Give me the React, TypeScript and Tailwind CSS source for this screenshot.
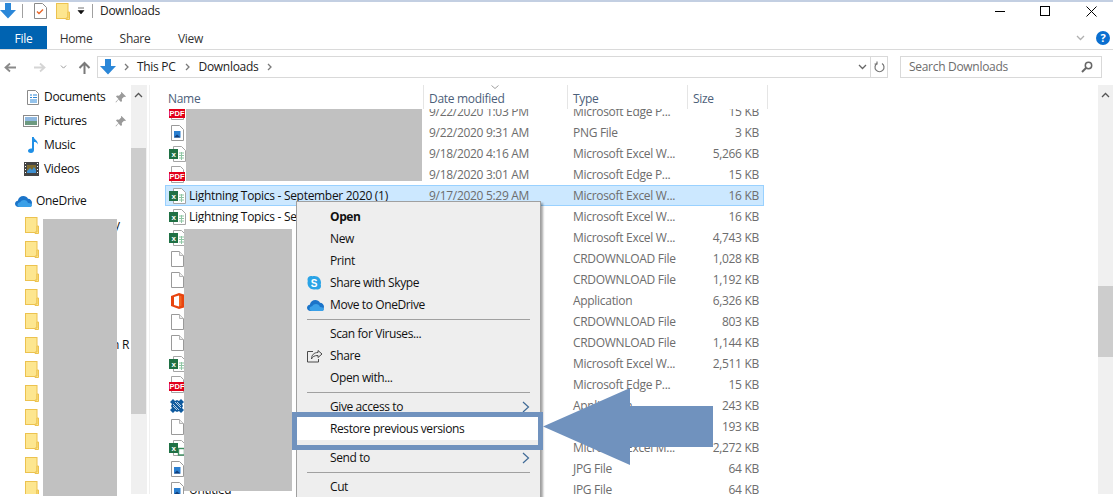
import React from "react";

const BLUE = "#2b87d8";

function DownArrow({ size = 18 }: { size?: number }) {
  return (
    <svg width={size} height={size} viewBox="0 0 16 16">
      <path d="M5 0h6v7h5l-8 8.5L0 7h5z" fill={BLUE} />
    </svg>
  );
}

function FolderIcon() {
  return (
    <svg width="14" height="17" viewBox="0 0 14 17">
      <rect x="0.5" y="0.5" width="11.5" height="15" fill="#fde68f" stroke="#ecc24f" />
      <path d="M12 9h1.5v7.5H10V15h2z" fill="#fde68f" stroke="#ecc24f" />
    </svg>
  );
}

function PlainFile() {
  return (
    <svg width="13" height="16" viewBox="0 0 13 16">
      <path d="M.5.5h8l4 4v11H.5z" fill="#fff" stroke="#9a9a9a" />
      <path d="M8.5.5v4h4" fill="#eee" stroke="#b5b5b5" />
    </svg>
  );
}

function ExcelIcon() {
  return (
    <svg width="17" height="16" viewBox="0 0 17 16">
      <path d="M4.5.5h8l4 4v11h-12z" fill="#fff" stroke="#a5a5a5" />
      <path d="M10 7h5M10 9.5h5M10 12h5M12.5 6v8" stroke="#8fc6a4" strokeWidth="1" />
      <rect x="0" y="3" width="9" height="10" fill="#1f7044" />
      <text x="4.5" y="11" fontSize="8" fontWeight="700" fill="#fff" textAnchor="middle" fontFamily="Liberation Sans">x</text>
    </svg>
  );
}

function ExcelMacroIcon() {
  return (
    <svg width="17" height="16" viewBox="0 0 17 16">
      <path d="M4.5.5h8l4 4v11h-12z" fill="#fff" stroke="#a5a5a5" />
      <rect x="9.5" y="8.5" width="6" height="6.5" fill="#fff" stroke="#3c8f60" strokeWidth="1.4" />
      <rect x="0" y="3" width="9" height="10" fill="#1f7044" />
      <text x="4.5" y="11" fontSize="8" fontWeight="700" fill="#fff" textAnchor="middle" fontFamily="Liberation Sans">x</text>
    </svg>
  );
}

function PdfIcon() {
  return (
    <svg width="17" height="17" viewBox="0 0 17 17">
      <path d="M2.5.5h9l3 3v13h-12z" fill="#fff" stroke="#a5a5a5" />
      <rect x="0" y="6" width="16" height="9" fill="#e2001a" />
      <text x="8" y="13.400" fontSize="7.500" fontWeight="700" fill="#fff" textAnchor="middle" fontFamily="Liberation Sans" letterSpacing="0">PDF</text>
    </svg>
  );
}

function PngIcon() {
  return (
    <svg width="13" height="16" viewBox="0 0 13 16">
      <path d="M.5.5h8l4 4v11H.5z" fill="#fff" stroke="#9a9a9a" />
      <rect x="3" y="6" width="6.500" height="6.500" fill="#2a7fd0" />
      <path d="M3 12.500l3-3 3.500 3z" fill="#123f7c" />
    </svg>
  );
}

function OfficeIcon() {
  return (
    <svg width="13" height="16" viewBox="0 0 13 16">
      <path d="M8 0l5 1.500v13L8 16 0 13V3z" fill="#e8440f" />
      <path d="M8 2.500L3 4v8l5 1.500z" fill="#fff" />
      <path d="M8 2.500v11l2.500-.8V3.200z" fill="#f26522" />
    </svg>
  );
}

function GearIcon() {
  return (
    <svg width="14" height="14" viewBox="0 0 14 14">
      <path d="M3 0l2 2 2-1 2 1 2-2 3 3-2 2 1 2-1 2 2 2-3 3-2-2-2 1-2-1-2 2-3-3 2-2-1-2 1-2-2-2z" fill="#0f5a9e" />
      <path d="M3 5l6 6M5 3l6 6M7 3l4 4M3 7l4 4" stroke="#fff" strokeWidth="0.700" />
    </svg>
  );
}

function OneDriveIcon({ w = 17 }: { w?: number }) {
  return (
    <svg width={w} height={(w * 11) / 17} viewBox="0 0 17 11">
      <path d="M3.500 11C1.500 11 0 9.600 0 7.800 0 6.200 1.200 5 2.800 4.800 3.400 2 5.600 0 8.400 0c2 0 3.700 1 4.600 2.700 2.200 0 4 1.800 4 4 0 2.400-1.800 4.300-4.200 4.300z" fill="#1b74c9" />
      <path d="M5 11c-1.500 0-2.500-1-2.500-2.300S3.700 6.300 5.200 6.300c.8-1.500 2.200-2.300 3.800-2.300 1.900 0 3.500 1.200 4 3h.3C15.500 7 17 8 17 9.200c0 1-.9 1.800-2 1.800z" fill="#3aa0e8" />
    </svg>
  );
}

const files: [React.ReactNode, string, string, string, string][] = [
  [<PdfIcon />, "", "9/22/2020 1:03 PM", "Microsoft Edge P...", "15 KB"],
  [<PngIcon />, "", "9/22/2020 9:31 AM", "PNG File", "3 KB"],
  [<ExcelIcon />, "", "9/18/2020 4:16 AM", "Microsoft Excel W...", "5,266 KB"],
  [<PdfIcon />, "", "9/18/2020 3:01 AM", "Microsoft Edge P...", "15 KB"],
  [<ExcelIcon />, "Lightning Topics - September 2020 (1)", "9/17/2020 5:29 AM", "Microsoft Excel W...", "16 KB"],
  [<ExcelIcon />, "Lightning Topics - September 2020", "", "Microsoft Excel W...", "16 KB"],
  [<ExcelIcon />, "", "", "Microsoft Excel W...", "4,743 KB"],
  [<PlainFile />, "", "", "CRDOWNLOAD File", "1,028 KB"],
  [<PlainFile />, "", "", "CRDOWNLOAD File", "1,192 KB"],
  [<OfficeIcon />, "", "", "Application", "6,326 KB"],
  [<PlainFile />, "", "", "CRDOWNLOAD File", "803 KB"],
  [<PlainFile />, "", "", "CRDOWNLOAD File", "1,144 KB"],
  [<ExcelIcon />, "", "", "Microsoft Excel W...", "2,511 KB"],
  [<PdfIcon />, "", "", "Microsoft Edge P...", "15 KB"],
  [<GearIcon />, "", "", "Application", "243 KB"],
  [<PlainFile />, "", "", "CRDOWNLOAD File", "193 KB"],
  [<ExcelMacroIcon />, "", "", "Microsoft Excel M...", "2,272 KB"],
  [<PngIcon />, "", "", "JPG File", "64 KB"],
  [<PngIcon />, "Untitled", "", "JPG File", "64 KB"],
];

type MenuEntry = { label?: string; bold?: boolean; icon?: React.ReactNode; sub?: boolean; sep?: boolean };

const menu: MenuEntry[] = [
  { label: "Open", bold: true },
  { label: "New" },
  { label: "Print" },
  {
    label: "Share with Skype",
    icon: (
      <svg width="14" height="14" viewBox="0 0 14 14">
        <path d="M4 0C2 0 .5 1.500.5 3.500c0 .6.1 1 .3 1.500C.6 5.600.5 6.300.5 7c0 3.600 2.900 6.500 6.500 6.500.7 0 1.400-.1 2-.3.5.2 1 .3 1.500.3 2 0 3.500-1.500 3.500-3.500 0-.6-.1-1-.3-1.500.2-.6.3-1.300.3-2C14 2.900 11.100 0 7.500 0 6.800 0 6.100.1 5.500.3 5 .1 4.600 0 4 0z" fill="#2aa3e6" />
        <text x="7" y="11" fontSize="10" fontWeight="700" fill="#fff" textAnchor="middle" fontFamily="Liberation Sans">S</text>
      </svg>
    ),
  },
  { label: "Move to OneDrive", icon: <OneDriveIcon /> },
  { sep: true },
  { label: "Scan for Viruses..." },
  {
    label: "Share",
    icon: (
      <svg width="16" height="14" viewBox="0 0 16 14" fill="none" stroke="#4a4a4a">
        <path d="M11 1.500l4 3.500-4 3.500V6.500C7.500 6.500 5.500 7.500 4.500 10 4.500 6 7 3.500 11 3.500z" />
        <path d="M6 2.500H.5v10.500h11V10" />
      </svg>
    ),
  },
  { label: "Open with..." },
  { sep: true },
  { label: "Give access to", sub: true },
  { label: "Restore previous versions" },
  { sep: true },
  { label: "Send to", sub: true },
  { sep: true },
  { label: "Cut" },
];

function Chevron({ up = false, className = "" }: { up?: boolean; className?: string }) {
  return (
    <svg width="9" height="6" viewBox="0 0 9 6" className={className}>
      <path d={up ? "M1 5l3.500-3.500L8 5" : "M1 1l3.500 3.500L8 1"} fill="none" stroke="currentColor" strokeWidth="1.300" />
    </svg>
  );
}

function Crumb({ className }: { className: string }) {
  return (
    <svg width="5" height="8" viewBox="0 0 5 8" className={className}>
      <path d="M1 1l3 3-3 3" fill="none" stroke="#7a7a7a" strokeWidth="1.300" />
    </svg>
  );
}

function Pin() {
  return (
    <svg width="11" height="11" viewBox="0 0 11 11" className="ml-auto mr-[5px]">
      <path d="M6.500 0L11 4.500l-1 .6-1-.3L6.800 7l.2 2-1 1-2.500-2.500L1 10.500l-.5-.5 3-3L1 4.500l1-1 2 .2L6.200 1.500 5.900.5z" fill="#9a9a9a" />
    </svg>
  );
}

function NavItem({ icon, label, pin }: { icon: React.ReactNode; label: string; pin?: boolean }) {
  return (
    <div className="flex h-6 items-center">
      <span className="flex w-[44px] shrink-0 justify-end pr-[5px]">{icon}</span>
      <span className="text-[#111]">{label}</span>
      {pin && <Pin />}
    </div>
  );
}

export default function App() {
  return (
    <div
      className="relative h-[497px] w-[1113px] overflow-hidden bg-white text-[12px] leading-none tracking-[-0.3px] text-[#1a1a1a]"
      style={{ fontFamily: '"Open Sans", "Noto Sans", sans-serif' }}
    >
      <div className="h-[2px] bg-[#c3cfe2]" />

      {/* Title bar */}
      <div className="flex h-[24px] items-center pb-[6px]">
        <DownArrow size={16} />
        <div className="ml-[6px] h-[14px] w-px bg-[#a0a0a0]" />
        <svg width="13" height="16" viewBox="0 0 13 16" className="ml-[11px]">
          <path d="M.5.5h8l4 4v11H.5z" fill="#fff" stroke="#8a8a8a" />
          <path d="M3 8.500l2 2 4-4" fill="none" stroke="#e8662a" strokeWidth="1.400" />
        </svg>
        <div className="ml-[9px]"><FolderIcon /></div>
        <svg width="8" height="8" viewBox="0 0 8 8" className="ml-[7px]">
          <path d="M1 1h6M1 3.500h6l-3 3.500z" fill="#111" stroke="#111" strokeWidth="0.600" />
        </svg>
        <div className="ml-[7px] h-[14px] w-px bg-[#a0a0a0]" />
        <span className="ml-[7px] text-[#222]">Downloads</span>
        <div className="ml-auto flex items-center">
          <div className="h-px w-[10px] bg-black" />
          <div className="ml-[35px] h-[10px] w-[10px] border border-black" />
          <svg width="11" height="11" viewBox="0 0 11 11" className="ml-[36px] mr-[16px]">
            <path d="M.5.5l10 10M10.500.5l-10 10" stroke="#000" />
          </svg>
        </div>
      </div>

      {/* Ribbon tabs */}
      <div className="flex h-[24px] items-stretch border-b border-[#dadada]">
        <div className="flex w-[47px] items-center justify-center bg-[#0063b1] pt-[2px] text-white">File</div>
        <div className="flex w-[58px] items-center justify-center pt-[2px] text-[#333]">Home</div>
        <div className="flex w-[60px] items-center justify-center pt-[2px] text-[#333]">Share</div>
        <div className="flex w-[51px] items-center justify-center pt-[2px] text-[#333]">View</div>
        <div className="ml-auto flex items-center pr-[3px]">
          <Chevron className="mr-[11px] text-[#b0b0b0]" />
          <div className="flex h-[14px] w-[14px] items-center justify-center rounded-full bg-[#0a6fd0] text-[11px] font-bold text-white">?</div>
        </div>
      </div>

      {/* Address row */}
      <div className="mt-[6px] flex h-[22px] items-stretch">
        <div className="flex w-[97px] items-center text-[#8a8a8a]">
          <svg width="13" height="11" viewBox="0 0 13 11" className="ml-[4px]">
            <path d="M12 5.500H2M6 1.500l-4.500 4 4.500 4" fill="none" stroke="#8a8a8a" strokeWidth="1.800" />
          </svg>
          <svg width="13" height="11" viewBox="0 0 13 11" className="ml-[16px]">
            <path d="M1 5.500h10M7 1.500l4.500 4-4.500 4" fill="none" stroke="#d5d5d5" strokeWidth="1.800" />
          </svg>
          <Chevron className="ml-[13px] scale-75 text-[#9a9a9a]" />
          <svg width="13" height="13" viewBox="0 0 13 13" className="ml-[10px]">
            <path d="M6.500 13V2M1.500 7l5-5 5 5" fill="none" stroke="#7a7a7a" strokeWidth="2" />
          </svg>
        </div>
        <div className="flex w-[791px] items-center border border-[#d9d9d9]">
          <span className="ml-[2px]"><DownArrow size={16} /></span>
          <Crumb className="mx-[8px]" />
          <span className="text-[#222]">This PC</span>
          <Crumb className="mx-[9px]" />
          <span className="text-[#222]">Downloads</span>
          <Crumb className="mx-[9px]" />
          <div className="ml-auto flex h-full items-center">
            <Chevron className="mr-[3px] text-[#666]" />
            <div className="flex h-full w-[17px] items-center justify-center border-l border-[#d9d9d9]">
              <svg width="11" height="12" viewBox="0 0 11 12" fill="none" stroke="#777" strokeWidth="1.200">
                <path d="M3 2.500A4.500 4.500 0 1 0 8 2.500" />
                <path d="M3 .5v2.500H.5" />
              </svg>
            </div>
          </div>
        </div>
        <div className="ml-[12px] flex w-[202px] items-center border border-[#d9d9d9] pl-[8px] text-[#6d6d6d]">
          Search Downloads
          <svg width="12" height="12" viewBox="0 0 12 12" className="ml-auto mr-[8px]" fill="none" stroke="#666" strokeWidth="1.500">
            <circle cx="7.500" cy="4.500" r="3.200" />
            <path d="M5 7L1 11" strokeWidth="2" />
          </svg>
        </div>
      </div>

      {/* Body */}
      <div className="mt-[7px] flex h-[409px] items-stretch">
        {/* Navigation pane */}
        <div className="w-[131px] shrink-0 overflow-hidden">
          <NavItem
            pin
            label="Documents"
            icon={
              <svg width="12" height="15" viewBox="0 0 12 15">
                <path d="M.5.5h8l3 3v11H.5z" fill="#fff" stroke="#8a8a8a" />
                <path d="M3 5h2M6 5h4M3 7.500h2M6 7.500h4M3 10h7M3 12h7" stroke="#2b87d8" />
              </svg>
            }
          />
          <NavItem
            pin
            label="Pictures"
            icon={
              <svg width="16" height="12" viewBox="0 0 16 12">
                <rect x=".5" y=".5" width="15" height="11" fill="#fff" stroke="#8a8a8a" />
                <rect x="2" y="2" width="12" height="4" fill="#8fb8e0" />
                <rect x="2" y="6" width="12" height="4" fill="#6d9a80" />
              </svg>
            }
          />
          <NavItem
            label="Music"
            icon={
              <svg width="11" height="16" viewBox="0 0 11 16">
                <path d="M4 0h1.800c.3 2.500 4.500 3.500 4 7.500C9 5.500 7.500 5 6 5v8c0 1.700-1.300 3-3 3s-3-.8-3-2.200S1.700 11 4 11.500z" fill="#1f8fe6" />
              </svg>
            }
          />
          <NavItem
            label="Videos"
            icon={
              <svg width="15" height="14" viewBox="0 0 15 14">
                <rect width="15" height="14" fill="#444" />
                <rect x="3" y="3" width="9" height="8" fill="#7d6a2f" />
                <path d="M3 9l3-3 2 2 2-3 2 3v3H3z" fill="#3d8fd0" />
                <path d="M1 1h1v1H1zM1 4h1v1H1zM1 7h1v1H1zM1 10h1v1H1zM13 1h1v1h-1zM13 4h1v1h-1zM13 7h1v1h-1zM13 10h1v1h-1z" fill="#fff" />
              </svg>
            }
          />
          <div className="mt-2 flex h-6 items-center">
            <span className="ml-[15px] mr-[4px] flex"><OneDriveIcon /></span>
            <span className="text-[#111]">OneDrive</span>
          </div>
          {Array.from({ length: 12 }).map((_, i) => (
            <div key={i} className="relative flex h-6 items-center pl-[25px]">
              <FolderIcon />
              {i === 0 && <span className="absolute left-[114px] text-[#111]">y</span>}
              {i === 5 && <span className="absolute left-[112px] whitespace-nowrap text-[#111]">n R</span>}
            </div>
          ))}
        </div>

        {/* Navigation scrollbar */}
        <div className="flex w-[16px] shrink-0 flex-col bg-[#f0f0f0]">
          <div className="flex h-[20px] items-center justify-center pr-px text-[#555]"><Chevron up /></div>
          <div className="mt-[43px] h-[266px] w-[15px] bg-[#cdcdcd]" />
        </div>
        <div className="ml-[2px] w-px shrink-0 bg-[#f0f0f0]" />

        {/* File list */}
        <div className="relative min-w-0 flex-1 overflow-hidden">
          <div className="relative z-10 flex h-[24px] items-stretch bg-white text-[#4c607a]">
            <div className="flex w-[273px] shrink-0 items-end pb-[4px] pl-[18px]">Name</div>
            <div className="relative flex w-[144px] shrink-0 items-end border-l border-[#e5e5e5] pb-[4px] pl-[5px]">
              Date modified
              <svg width="8" height="4" viewBox="0 0 8 4" className="absolute left-[67px] top-0">
                <path d="M.5.5L4 3.500 7.500.5" fill="none" stroke="#a0a0a0" />
              </svg>
            </div>
            <div className="flex w-[120px] shrink-0 items-end border-l border-[#e5e5e5] pb-[4px] pl-[5px]">Type</div>
            <div className="flex w-[81px] shrink-0 items-end border-x border-[#e5e5e5] pb-[4px] pl-[5px]">Size</div>
          </div>
          <div className="-mt-[8px]">
            {files.map(([icon, name, date, type, size], i) => {
              const selected = i === 4;
              return (
                <div
                  key={i}
                  className={`ml-[15px] flex h-[21px] w-[599px] items-center border ${selected ? "border-[#99d1ff] bg-[#cce8ff]" : "border-transparent"}`}
                >
                  <span className="flex w-[22px] shrink-0 justify-center">{icon}</span>
                  <span className="w-[241px] shrink-0 overflow-hidden whitespace-nowrap pl-px text-[#111]">{name}</span>
                  <span className="w-[144px] shrink-0 text-[#6d6d6d]">{date}</span>
                  <span className="w-[120px] shrink-0 whitespace-nowrap text-[#6d6d6d]">{type}</span>
                  <span className="w-[66px] shrink-0 text-right text-[#6d6d6d]">{size}</span>
                </div>
              );
            })}
          </div>
        </div>

        {/* Main scrollbar */}
        <div className="flex w-[15px] shrink-0 flex-col bg-[#f0f0f0]">
          <div className="flex h-[20px] items-center justify-center text-[#555]"><Chevron up /></div>
          <div className="mt-[181px] h-[71px] bg-[#cdcdcd]" />
        </div>
      </div>

      {/* Redactions */}
      <div className="absolute left-[186px] top-[106px] h-[75px] w-[236px] bg-[#c1c1c1]" />
      <div className="absolute left-[184px] top-[229px] h-[262px] w-[108px] bg-[#c1c1c1]" />
      <div className="absolute left-[43px] top-[219px] h-[277px] w-[74px] bg-[#c1c1c1]" />

      {/* Context menu */}
      <div className="absolute left-[296px] top-[201px] h-[300px] w-[245px] border border-[#a0a0a0] bg-[#eeeeee] pt-[4px] tracking-[-0.4px] shadow-[2px_2px_2px_rgba(0,0,0,0.35)]">
        {menu.map((m, i) =>
          m.sep ? (
            <div key={i} className="mx-[10px] my-[3px] h-px w-[223px] bg-[#a0a0a0]" />
          ) : (
            <div key={i} className="relative flex h-[22px] items-center pl-[33px] text-[#111]">
              {m.icon && <span className="absolute left-[10px] flex">{m.icon}</span>}
              <span className={m.bold ? "font-bold" : ""}>{m.label}</span>
              {m.sub && (
                <svg width="8" height="12" viewBox="0 0 8 12" className="absolute left-[225px]">
                  <path d="M1 1l5.500 5L1 11" fill="none" stroke="#3f6a96" strokeWidth="1.200" />
                </svg>
              )}
            </div>
          )
        )}
      </div>

      {/* Highlight annotation */}
      <div className="absolute left-[292px] top-[412px] flex h-[38px] w-[251px] flex-col border-[5px] border-[#7092be] tracking-[-0.4px]">
        <div className="flex h-[23px] items-center bg-white pl-[33px] text-[#111]">Restore previous versions</div>
        <div className="flex-1 bg-[#eeeeee]" />
      </div>
      <svg width="171" height="77" viewBox="0 0 171 77" className="absolute left-[543px] top-[388px]">
        <path d="M0 38.500L87 0v18h83v41H87v18z" fill="#7092be" />
      </svg>
    </div>
  );
}
